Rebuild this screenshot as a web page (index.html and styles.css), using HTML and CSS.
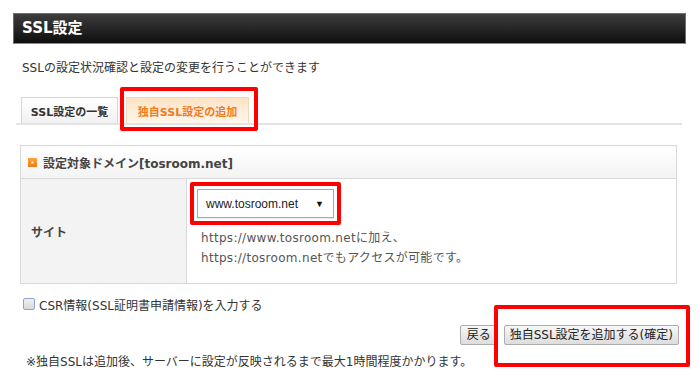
FILE: index.html
```html
<!DOCTYPE html>
<html lang="ja">
<head>
<meta charset="utf-8">
<title>SSL設定</title>
<link rel="stylesheet" href="styles.css">
</head>
<body>
<div class="page">
  <div class="title-bar"><h1 class="title">SSL設定</h1></div>
  <p class="desc">SSLの設定状況確認と設定の変更を行うことができます</p>

  <div class="tabs">
    <div class="tab">SSL設定の一覧</div>
    <div class="tab tab-active">独自SSL設定の追加</div>
  </div>

  <table class="form-table">
    <tr>
      <th class="head" colspan="2">
        <span class="head-inner">
          <svg class="head-icon" width="9" height="9" viewBox="0 0 9 9"><defs><linearGradient id="og" x1="0" y1="0" x2="0" y2="1"><stop offset="0" stop-color="#ffa43a"/><stop offset="1" stop-color="#f07b12"/></linearGradient></defs><rect x="0" y="0" width="9" height="9" fill="url(#og)"/><path d="M3.5 2.8 L6 4.5 L3.5 6.2 Z" fill="#fff" opacity="0.85"/></svg>
          設定対象ドメイン[tosroom.net]
        </span>
      </th>
    </tr>
    <tr>
      <th class="label">サイト</th>
      <td class="value">
        <div class="select"><span>www.tosroom.net</span><span class="arrow">▼</span></div>
        <p class="note-url">https://www.tosroom.netに加え、<br>https://tosroom.netでもアクセスが可能です。</p>
      </td>
    </tr>
  </table>

  <label class="csr"><span class="check"></span>CSR情報(SSL証明書申請情報)を入力する</label>

  <div class="buttons">
    <button class="btn btn-back">戻る</button>
    <button class="btn">独自SSL設定を追加する(確定)</button>
  </div>

  <p class="note">※独自SSLは追加後、サーバーに設定が反映されるまで最大1時間程度かかります。</p>

  <div class="mark mark-tab"></div>
  <div class="mark mark-select"></div>
  <div class="mark mark-button"></div>
</div>
</body>
</html>
```

FILE: styles.css
```css
* { box-sizing: border-box; }
html, body { margin: 0; padding: 0; background: #fff; }
body {
  font-family: "DejaVu Sans", "Noto Sans CJK JP", sans-serif;
  font-size: 12px;
  color: #333;
}
.page {
  position: relative;
  width: 700px;
  height: 392px;
  padding-top: 13px;
  overflow: hidden;
}
.title-bar {
  margin: 0 14px 0 13px;
  height: 31px;
  background: linear-gradient(#3d3d3d, #0e0e0e);
  border: 1px solid #6e6e6e;
  border-bottom-color: #8a8a8a;
  display: flex;
  align-items: center;
  padding-left: 8px;
}
.title {
  margin: 0;
  font-size: 15px;
  font-weight: bold;
  color: #fff;
  line-height: 1;
}
.desc {
  margin: 15px 0 0 22px;
  line-height: 18px;
  font-size: 12px;
  color: #333;
}
.tabs {
  margin: 20px 18px 0 16px;
  height: 28px;
  border-bottom: 2px solid #e3e3e3;
  display: flex;
  align-items: flex-end;
  gap: 8px;
  padding-left: 5px;
}
.tab {
  height: 26px;
  display: flex;
  align-items: center;
  justify-content: center;
  font-size: 11px;
  font-weight: bold;
  color: #333;
  border: 1px solid #d6d6d6;
  border-bottom: none;
  background: linear-gradient(#ffffff, #f1f1f1);
  width: 97px;
}
.tab-active {
  width: 123px;
  color: #f27b1e;
  border-color: #f0d7bb;
  background: linear-gradient(#fde3c6, #fff6ec);
}
.form-table {
  margin: 20px 0 0 20px;
  width: 657px;
  border-collapse: collapse;
  border: 1px solid #d9d9d9;
}
.form-table th, .form-table td {
  border: 1px solid #d9d9d9;
  padding: 0;
}
.head {
  height: 33px;
  text-align: left;
  background: linear-gradient(#ffffff, #f3f3f3);
  font-size: 12px;
  font-weight: bold;
  color: #444;
}
.head-inner {
  display: flex;
  align-items: center;
  gap: 6px;
  padding-left: 7px;
}
.head-icon { display: block; }
.label {
  width: 166px;
  background: #f3f3f3;
  text-align: left;
  padding-left: 10px !important;
  font-size: 12px;
  font-weight: bold;
  color: #444;
}
.value {
  background: #fff;
  vertical-align: top;
  padding: 10px 0 15px 10px !important;
}
.select {
  width: 137px;
  height: 29px;
  border: 1px solid #a9a9a9;
  background: #fff;
  box-shadow: 0 1px 1px rgba(0,0,0,0.08);
  display: flex;
  align-items: center;
  justify-content: space-between;
  padding: 0 9px 0 8px;
  font-family: "Liberation Sans", Arial, sans-serif;
  font-size: 12px;
  color: #222;
}
.arrow { font-size: 9px; color: #111; }
.note-url {
  margin: 10px 0 0 4px;
  line-height: 20px;
  color: #555;
  letter-spacing: 0.3px;
}
.csr {
  display: flex;
  align-items: center;
  margin: 11px 0 0 23px;
  height: 18px;
  color: #333;
}
.check {
  width: 12px;
  height: 12px;
  border: 1px solid #8fa6cc;
  border-radius: 2px;
  background: linear-gradient(#f0f0f0, #d9d9d9);
  margin-right: 4px;
}
.buttons {
  margin: 12px 21px 0 0;
  display: flex;
  justify-content: flex-end;
  gap: 6px;
}
.btn {
  height: 20px;
  padding: 0 5px;
  font-family: "DejaVu Sans", "Noto Sans CJK JP", sans-serif;
  font-size: 12px;
  color: #222;
  border: 1px solid #adadad;
  border-radius: 2px;
  background: linear-gradient(#f7f7f7, #dddddd);
  line-height: 18px;
}
.btn-back { padding: 0 6px; }
.note {
  margin: 8px 0 0 26px;
  line-height: 18px;
  color: #333;
}
.mark {
  position: absolute;
  border: 4px solid #ff0000;
  border-radius: 2px;
}
.mark-tab { left: 120px; top: 87px; width: 138px; height: 44px; }
.mark-select { left: 190px; top: 182px; width: 151px; height: 43px; }
.mark-button { left: 494px; top: 305px; width: 196px; height: 62px; }
```
